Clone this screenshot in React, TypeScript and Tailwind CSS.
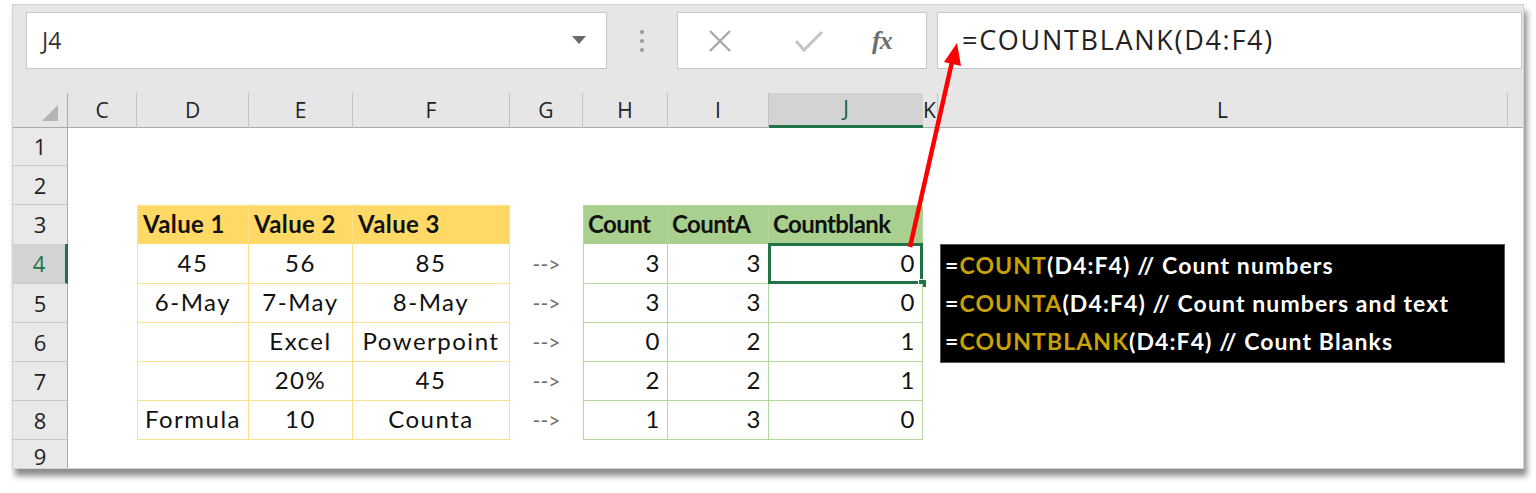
import React from 'react';

const cols = 'grid-cols-[55px_69px_112px_104px_157px_73px_85px_101px_154px_15px_570px_1fr]';
const letters = ['C', 'D', 'E', 'F', 'G', 'H', 'I', 'J', 'K', 'L'];
const rowHeights = ['h-[38px]', 'h-[39px]', 'h-[39px]', 'h-[40px]', 'h-[39px]', 'h-[39px]', 'h-[39px]', 'h-[39px]', 'h-[29px]'];

const yellow: Record<number, string[]> = {
  3: ['Value 1', 'Value 2', 'Value 3'],
  4: ['45', '56', '85'],
  5: ['6-May', '7-May', '8-May'],
  6: ['', 'Excel', 'Powerpoint'],
  7: ['', '20%', '45'],
  8: ['Formula', '10', 'Counta'],
};

const green: Record<number, string[]> = {
  3: ['Count', 'CountA', 'Countblank'],
  4: ['3', '3', '0'],
  5: ['3', '3', '0'],
  6: ['0', '2', '1'],
  7: ['2', '2', '1'],
  8: ['1', '3', '0'],
};

const cellFont = "font-['Lato','Liberation_Sans',sans-serif] text-[24px] text-[#111]";

const YellowCell = ({ row, idx }: { row: number; idx: number }) => {
  const text = yellow[row][idx];
  const head = row === 3;
  return (
    <div
      className={`flex items-end justify-center whitespace-nowrap pb-[2px] border-r border-b border-[#ffe08a] ${
        idx === 0 ? 'border-l' : ''
      } ${head ? 'border-t bg-[#ffd966] justify-start pl-[5px] font-bold tracking-[0.4px]' : 'bg-white tracking-[1.5px]'} ${cellFont}`}
    >
      {text}
    </div>
  );
};

const GreenCell = ({ row, idx }: { row: number; idx: number }) => {
  const text = green[row][idx];
  const head = row === 3;
  const selected = row === 4 && idx === 2;
  return (
    <div
      className={`relative flex items-end whitespace-nowrap pb-[2px] border-r border-b border-[#b4d79c] ${
        idx === 0 ? 'border-l' : ''
      } ${head ? 'border-t bg-[#a9d08e] justify-start pl-[4px] font-bold tracking-[-0.6px]' : 'bg-white justify-end pr-[6px] tracking-[1.5px]'} ${cellFont}`}
    >
      {text}
      {selected && (
        <>
          <div className="absolute -left-[1px] -top-[1px] -right-[1px] -bottom-[1px] border-[3px] border-[#217346]" />
          <div className="absolute -right-[5px] -bottom-[5px] h-[9px] w-[9px] bg-[#217346] border border-white" />
        </>
      )}
    </div>
  );
};

export default function App() {
  return (
    <div className="relative h-[493px] w-[1536px] overflow-hidden bg-white pl-[12px] pt-[4px]">
      <div className="flex h-[465px] w-[1512px] flex-col overflow-hidden border border-[#d2d2d2] bg-[#e6e6e6] shadow-[3px_7px_6px_rgba(0,0,0,0.45)]">
        {/* formula bar */}
        <div className="flex h-[88px] shrink-0 items-start pl-[13px] pt-[7px]">
          <div className="flex h-[57px] w-[581px] items-center justify-between border border-[#c6c6c6] bg-white pl-[15px] pr-[20px]">
            <span className="font-['Open_Sans','Noto_Sans',sans-serif] text-[23px] text-[#333]">J4</span>
            <svg width="14" height="9" viewBox="0 0 14 9">
              <polygon points="0,0 14,0 7,8" fill="#6a6a6a" />
            </svg>
          </div>
          <div className="flex h-[57px] w-[70px] flex-col items-center justify-center gap-[5px]">
            <div className="h-[4px] w-[4px] rounded-full bg-[#9a9a9a]" />
            <div className="h-[4px] w-[4px] rounded-full bg-[#9a9a9a]" />
            <div className="h-[4px] w-[4px] rounded-full bg-[#9a9a9a]" />
          </div>
          <div className="flex h-[57px] w-[250px] items-center border border-[#c6c6c6] bg-white">
            <svg className="ml-[30px]" width="24" height="24" viewBox="0 0 24 24">
              <path d="M2 2 L22 22 M22 2 L2 22" stroke="#a6a6a6" strokeWidth="2.2" />
            </svg>
            <svg className="ml-[62px]" width="30" height="24" viewBox="0 0 30 24">
              <path d="M2 12 L10 21 L28 3" stroke="#c4c4c4" strokeWidth="3" fill="none" />
            </svg>
            <span className="ml-[48px] font-['Liberation_Serif',serif] text-[26px] italic font-bold text-[#6e6e6e] tracking-[-1px]">fx</span>
          </div>
          <div className="ml-[10px] flex h-[57px] w-[585px] items-center border border-[#c6c6c6] bg-white pl-[24px]">
            <span className="font-['Open_Sans','Noto_Sans',sans-serif] text-[27px] tracking-[1.7px] text-[#222]">=COUNTBLANK(D4:F4)</span>
          </div>
        </div>

        {/* column headers */}
        <div className={`grid ${cols} h-[35px] shrink-0 border-b border-[#ababab]`}>
          <div className="relative border-r border-[#ababab]">
            <svg className="absolute right-[9px] bottom-[7px]" width="16" height="16" viewBox="0 0 16 16">
              <polygon points="16,0 16,16 0,16" fill="#b5b5b5" />
            </svg>
          </div>
          {letters.map((l) => (
            <div
              key={l}
              className={`flex items-center justify-center font-['Open_Sans','Noto_Sans',sans-serif] text-[21px] font-medium ${
                l === 'J'
                  ? 'bg-[#d3d3d3] border-b-[3px] border-[#217346] text-[#1e5e3a]'
                  : 'text-[#222] border-r border-[#c2c2c2]'
              } ${l === 'K' ? 'justify-start overflow-visible' : ''}`}
            >
              {l}
            </div>
          ))}
          <div />
        </div>

        {/* rows */}
        <div className="flex flex-col">
          {rowHeights.map((h, i) => {
            const r = i + 1;
            return (
              <div key={r} className={`grid ${cols} ${h}`}>
                <div
                  className={`flex items-center justify-center border-b border-[#c8c8c8] font-['Open_Sans','Noto_Sans',sans-serif] text-[22px] font-medium ${
                    r === 4
                      ? 'bg-[#d3d3d3] text-[#217346] border-r-[3px] border-r-[#217346]'
                      : 'bg-[#e9e9e9] text-[#222] border-r border-r-[#ababab]'
                  }`}
                >
                  {r}
                </div>
                <div className="bg-white" />
                {yellow[r] ? (
                  [0, 1, 2].map((k) => <YellowCell key={k} row={r} idx={k} />)
                ) : (
                  <>
                    <div className="bg-white" />
                    <div className="bg-white" />
                    <div className="bg-white" />
                  </>
                )}
                <div className="flex items-end justify-center pb-[5px] bg-white font-['Lato',sans-serif] text-[21px] text-[#6f6f6f]">
                  {r >= 4 && r <= 8 ? '-->' : ''}
                </div>
                {green[r] ? (
                  [0, 1, 2].map((k) => <GreenCell key={k} row={r} idx={k} />)
                ) : (
                  <>
                    <div className="bg-white" />
                    <div className="bg-white" />
                    <div className="bg-white" />
                  </>
                )}
                <div className="bg-white" />
                <div className="bg-white" />
                <div className="bg-white" />
              </div>
            );
          })}
        </div>
      </div>

      {/* note box */}
      <div className="absolute left-[940px] top-[244px] flex h-[119px] w-[565px] flex-col justify-center gap-[5px] border border-[#555] bg-black pl-[4px] font-['Lato','Liberation_Sans',sans-serif] text-[23px] font-bold tracking-[1.1px] text-white">
        <div className="leading-[33px] whitespace-nowrap">
          <span>=</span>
          <span className="text-[#c9a100]">COUNT</span>(D4:F4) // Count numbers
        </div>
        <div className="leading-[33px] whitespace-nowrap">
          <span>=</span>
          <span className="text-[#c9a100]">COUNTA</span>(D4:F4) // Count numbers and text
        </div>
        <div className="leading-[33px] whitespace-nowrap">
          <span>=</span>
          <span className="text-[#c9a100]">COUNTBLANK</span>(D4:F4) // Count Blanks
        </div>
      </div>

      {/* red arrow */}
      <svg className="pointer-events-none absolute left-0 top-0" width="1536" height="493" viewBox="0 0 1536 493">
        <line x1="910" y1="247" x2="952" y2="62" stroke="#ff0000" strokeWidth="4.5" />
        <polygon points="957,43 961,66 944,62" fill="#ff0000" />
      </svg>
    </div>
  );
}
